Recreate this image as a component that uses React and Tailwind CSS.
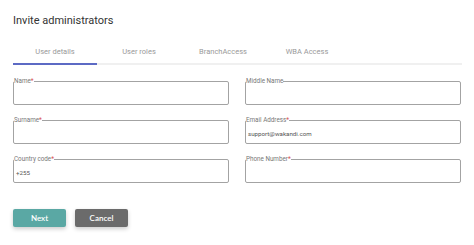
import React from "react";

const TABS = ["User details", "User roles", "BranchAccess", "WBA Access"];

function Field({ label, required, value }) {
  return (
    <fieldset className="h-[28px] rounded-[2px] border border-[#a3a3a3] px-[1px] pb-0">
      <legend className="ml-[-1px] p-0 text-[6.3px] leading-[8px] text-[#777]">
        {label}
        {required && <span className="text-[#d9534f]">*</span>}
      </legend>
      <div className="pl-[1px] pt-[6px] text-[6.2px] leading-[9px] text-[#555]">{value}</div>
    </fieldset>
  );
}

export default function App() {
  return (
    <div className="h-[245px] w-[474px] bg-white pl-[13px] pr-[12px] font-['Roboto',sans-serif]">
      <h1 className="pt-[14px] text-[11px] leading-[14px] text-[#333]">Invite administrators</h1>

      <div className="mt-[13px] flex w-[449px] border-b-2 border-[#f0f0f0]">
        {TABS.map((t, i) => (
          <div
            key={t}
            className={`-mb-[2px] flex h-[24px] w-[84px] items-center justify-center border-b-2 text-[7.5px] text-[#999] ${
              i === 0 ? "border-[#5c6ac4]" : "border-transparent"
            }`}
          >
            {t}
          </div>
        ))}
      </div>

      <div className="mt-[12px] grid w-[448px] grid-cols-2 gap-x-[16px] gap-y-[11px]">
        <Field label="Name" required />
        <Field label="Middle Name" />
        <Field label="Surname" required />
        <Field label="Email Address" required value="support@wakandi.com" />
        <Field label="Country code" required value="+255" />
        <Field label="Phone Number" required />
      </div>

      <div className="mt-[26px] flex gap-[9px] font-['Lato',sans-serif]">
        <button className="h-[18px] w-[53px] rounded-[2px] bg-[#5aa8a4] text-[8px] font-semibold text-white shadow-[0_2px_4px_rgba(0,0,0,0.2)]">
          Next
        </button>
        <button className="h-[18px] w-[53px] rounded-[2px] bg-[#6b6b6b] text-[8px] font-semibold text-white shadow-[0_2px_4px_rgba(0,0,0,0.2)]">
          Cancel
        </button>
      </div>
    </div>
  );
}
